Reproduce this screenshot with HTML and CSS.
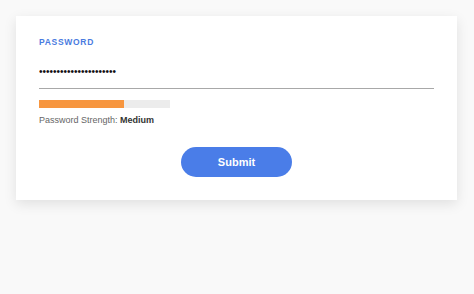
FILE: index.html
```html
<!DOCTYPE html>
<html lang="en">
<head>
    <meta charset="UTF-8">
    <meta name="viewport" content="width=device-width, initial-scale=1.0">
    <title>Password</title>
    <link rel="stylesheet" href="styles.css">
</head>
<body>
    <div class="wrap">
        <form class="card" onsubmit="return false">
            <label class="field-label" for="password">Password</label>
            <input id="password" class="field-input" type="password" value="abcdefghijklmnopqrstuv">
            <div class="strength-bar">
                <div class="strength-fill" style="width: 65%"></div>
            </div>
            <p class="strength-text">Password Strength: <strong>Medium</strong></p>
            <div class="actions">
                <button type="submit" class="submit-btn">Submit</button>
            </div>
        </form>
    </div>
</body>
</html>
```

FILE: styles.css
```css
html {
    background: #ffffff;
}
body {
    font-family: "Liberation Sans", Arial, sans-serif;
    margin: 0;
    background: #f9f9f9;
    min-height: 294px;
}
.wrap {
    padding: 16px 17px 16px 16px;
}
.card {
    display: block;
    background: #ffffff;
    padding: 21px 23px 23px;
    box-shadow: 0 4px 12px rgba(0, 0, 0, 0.1);
}
.field-label {
    display: block;
    font-size: 8.5px;
    line-height: 10px;
    font-weight: bold;
    letter-spacing: 0.7px;
    text-transform: uppercase;
    color: #4a7be0;
}
.field-input {
    display: block;
    box-sizing: border-box;
    width: 100%;
    height: 28px;
    margin-top: 14px;
    padding: 0 0 7px 0;
    border: none;
    border-bottom: 1px solid #a8a8a8;
    font-family: "Liberation Sans", Arial, sans-serif;
    font-size: 10px;
    color: #111;
    outline: none;
    background: transparent;
}
.strength-bar {
    width: 131px;
    height: 8px;
    margin-top: 11px;
    background: #ececec;
}
.strength-fill {
    height: 100%;
    background: #f7963f;
}
.strength-text {
    margin: 6px 0 0;
    font-size: 9px;
    line-height: 12px;
    color: #666;
}
.strength-text strong {
    color: #333;
}
.actions {
    display: flex;
    justify-content: center;
    margin-top: 21px;
}
.submit-btn {
    width: 111px;
    height: 30px;
    border: none;
    border-radius: 15px;
    background: #4a7de8;
    color: #ffffff;
    font-family: "Liberation Sans", Arial, sans-serif;
    font-size: 11px;
    font-weight: bold;
    cursor: pointer;
}
```
